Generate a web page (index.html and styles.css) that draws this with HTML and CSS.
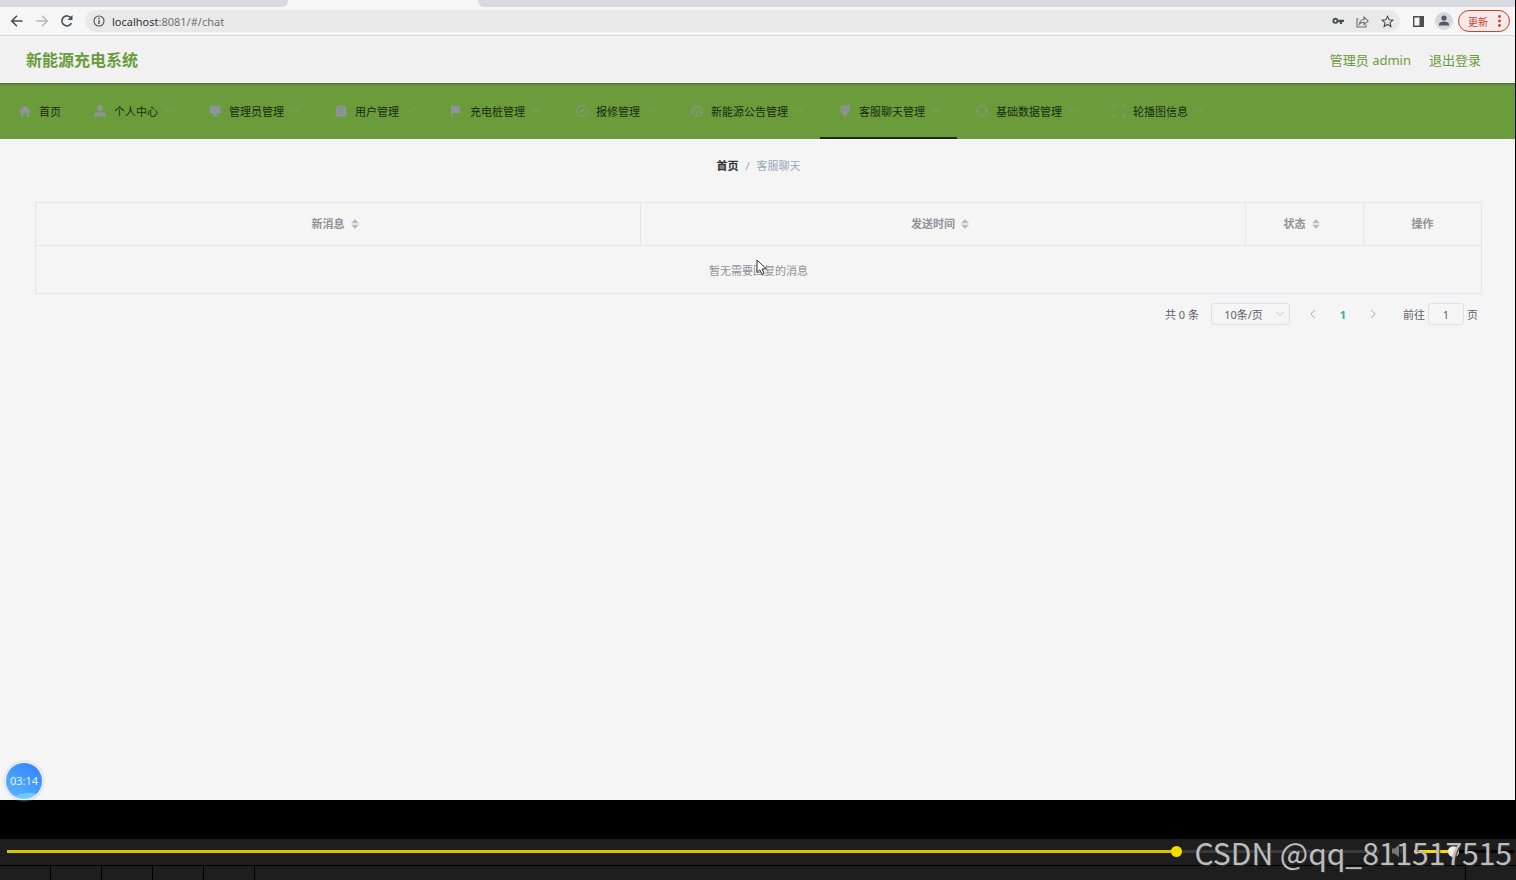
FILE: index.html
```html
<!DOCTYPE html>
<html lang="zh">
<head>
    <meta charset="UTF-8">
    <meta name="viewport" content="width=device-width, initial-scale=1.0">
    <title>新能源充电系统</title>
    <link rel="stylesheet" href="styles.css">
</head>
<body>
    <div class="browser">
        <div class="tab-strip">
            <div class="tab tab-left"></div>
            <div class="tab-current"></div>
            <div class="tab tab-right"></div>
        </div>
        <div class="toolbar">
            <button class="tool" aria-label="后退"><svg width="14" height="14" viewBox="0 0 14 14" fill="none" stroke="#4b4e52" stroke-width="1.6"><path d="M12.5 7H2M7 1.8 1.8 7 7 12.2"/></svg></button>
            <button class="tool" aria-label="前进"><svg width="14" height="14" viewBox="0 0 14 14" fill="none" stroke="#b4b6b8" stroke-width="1.5"><path d="M1.5 7H12M7 1.8 12.2 7 7 12.2"/></svg></button>
            <button class="tool" aria-label="刷新"><svg width="14" height="14" viewBox="0 0 14 14" fill="none" stroke="#4b4e52" stroke-width="1.6"><path d="M11.4 9.2A5 5 0 1 1 11 4"/><path d="M12.5 1v5h-5z" fill="#4b4e52" stroke="none"/></svg></button>
            <div class="address">
                <svg width="12" height="12" viewBox="0 0 12 12" fill="none" stroke="#4b4e52" stroke-width="1.1"><circle cx="6" cy="6" r="5"/><path d="M6 5.2V9M6 2.8v1.4" stroke-width="1.4"/></svg>
                <span class="url">localhost<i>:8081/#/chat</i></span>
                <button class="tool" aria-label="密码"><svg width="12" height="12" viewBox="0 0 12 12"><path d="M3.4 2.8a3 3 0 1 0 2.8 4.1h1.6v2h2.2v-2H12V4.7H6.2a3 3 0 0 0-2.8-1.9zm0 2a1.1 1.1 0 1 1 0 2.2 1.1 1.1 0 0 1 0-2.2z" fill="#4b4e52"/></svg></button>
                <button class="tool" aria-label="分享"><svg width="13" height="13" viewBox="0 0 13 13" fill="none" stroke="#6b6e72" stroke-width="1.1"><path d="M2.6 4H1v8h9V9.6"/><path d="M3.4 9.2c.3-3 2-4.6 4.6-4.7V2l4.2 3.9L8 9.6V7.2c-2 0-3.5.5-4.6 2z"/></svg></button>
                <button class="tool" aria-label="收藏"><svg width="13" height="13" viewBox="0 0 13 13" fill="none" stroke="#4b4e52" stroke-width="1.1"><path d="m6.5 1.3 1.6 3.5 3.8.4-2.9 2.5.9 3.8-3.4-2-3.4 2 .9-3.8-2.9-2.5 3.8-.4z"/></svg></button>
            </div>
            <button class="tool" aria-label="侧边栏"><svg width="11" height="11" viewBox="0 0 11 11"><path d="M.7.7h9.6v9.6H.7z" fill="none" stroke="#4b4e52" stroke-width="1.4"/><path d="M6.5 0H11v11H6.5z" fill="#4b4e52"/></svg></button>
            <button class="tool" aria-label="用户"><svg width="18" height="18" viewBox="0 0 18 18"><circle cx="9" cy="9" r="9" fill="#d6d8dd"/><circle cx="9" cy="6" r="2.6" fill="#53596b"/><path d="M4 13.500v-1.200c0-1.800 2.400-2.700 5-2.700s5 .9 5 2.700v1.200z" fill="#53596b"/></svg></button>
            <button class="update">更新
                <svg width="3" height="12" viewBox="0 0 3 12" fill="#c5422f"><circle cx="1.5" cy="1.5" r="1.4"/><circle cx="1.5" cy="6" r="1.4"/><circle cx="1.5" cy="10.5" r="1.4"/></svg>
            </button>
        </div>

        <header class="header">
            <h1 class="title">新能源充电系统</h1>
            <div class="user">
                <span>管理员 admin</span>
                <a href="#/login">退出登录</a>
            </div>
        </header>

        <nav class="menu">
            <a class="menu-item home" href="#/">
                <svg class="icon" viewBox="0 0 12 12"><path d="M6 .6.4 5.500l.8 1L1.800 6v5.400h2.800V8h2.800v3.400h2.800V6l.6.5.8-1z"/></svg>
                首页
            </a>
            <a class="menu-item" href="#/center">
                <svg class="icon" viewBox="0 0 12 12"><circle cx="6" cy="3.2" r="2.900"/><path d="M.5 11.500V9.800C.5 8.200 1.800 7.200 3.400 7.200h5.200c1.600 0 2.900 1 2.900 2.600v1.700z"/></svg>
                个人中心
                <svg class="arrow" viewBox="0 0 10 10"><path d="m1.500 3 3.500 3.500L8.500 3"/></svg>
            </a>
            <a class="menu-item" href="#/admins">
                <svg class="icon" viewBox="0 0 12 12"><path d="M.5.8h11v8H.5zM5 8.800h2v1.600h2.200v1H2.800v-1H5z"/></svg>
                管理员管理
                <svg class="arrow" viewBox="0 0 10 10"><path d="m1.500 3 3.500 3.500L8.500 3"/></svg>
            </a>
            <a class="menu-item" href="#/users">
                <svg class="icon" viewBox="0 0 12 12"><path d="M.8 1.500H3V.5h6v1h2.200v10.300H.8z"/><path d="M3 3h6M3 5.800h6M3 8.500h6" stroke="#75985c" stroke-width=".8"/></svg>
                用户管理
                <svg class="arrow" viewBox="0 0 10 10"><path d="m1.500 3 3.500 3.500L8.500 3"/></svg>
            </a>
            <a class="menu-item" href="#/piles">
                <svg class="icon" viewBox="0 0 12 12"><path d="M1 .2h1.200V1h9L9.500 4.500 11.200 8H2.200v4H1z"/></svg>
                充电桩管理
                <svg class="arrow" viewBox="0 0 10 10"><path d="m1.500 3 3.500 3.500L8.500 3"/></svg>
            </a>
            <a class="menu-item" href="#/repairs">
                <svg class="icon line" viewBox="0 0 12 12"><circle cx="6" cy="6" r="5.400"/><path d="M8.500 3.500 5 5 3.700 8.400 7 7z" class="solid"/></svg>
                报修管理
                <svg class="arrow" viewBox="0 0 10 10"><path d="m1.500 3 3.500 3.500L8.500 3"/></svg>
            </a>
            <a class="menu-item" href="#/notices">
                <svg class="icon line" viewBox="0 0 12 12"><circle cx="6" cy="6" r="5.400"/><path d="M2.500 8V6a3.500 3.500 0 0 1 7 0v2M6.800 4.500 5.800 8"/><circle cx="5.800" cy="8.300" r=".8"/></svg>
                新能源公告管理
                <svg class="arrow" viewBox="0 0 10 10"><path d="m1.500 3 3.500 3.500L8.500 3"/></svg>
            </a>
            <a class="menu-item active" href="#/chat">
                <svg class="icon" viewBox="0 0 12 12"><path d="M1.500.5h9v4.200h-9zM1.500 5.300h9v2.500H8.300L7.200 11 6 12 4.800 11 3.700 7.800H1.500z"/></svg>
                客服聊天管理
                <svg class="arrow" viewBox="0 0 10 10"><path d="m1.500 3 3.500 3.500L8.500 3"/></svg>
            </a>
            <a class="menu-item" href="#/dictionary">
                <svg class="icon line" viewBox="0 0 12 12"><circle cx="6" cy="6" r="5.300"/><path d="M6 .7v2.900M6 8.400v2.900M.7 6h2.900M8.400 6h2.900"/></svg>
                基础数据管理
                <svg class="arrow" viewBox="0 0 10 10"><path d="m1.500 3 3.500 3.500L8.500 3"/></svg>
            </a>
            <a class="menu-item" href="#/carousel">
                <svg class="icon line" viewBox="0 0 12 12"><path d="M.6 4V.6H4M8 .6h3.400V4M11.400 8v3.400H8M4 11.400H.6V8"/></svg>
                轮播图信息
                <svg class="arrow" viewBox="0 0 10 10"><path d="m1.500 3 3.500 3.500L8.500 3"/></svg>
            </a>
        </nav>

        <main class="main">
            <div class="breadcrumb">
                <a href="#/">首页</a>
                <span>/</span>
                <span>客服聊天</span>
            </div>

            <div class="table-wrap">
                <table class="table">
                    <thead>
                        <tr>
                            <th>新消息<svg class="sort" viewBox="0 0 8 10"><path d="M0 4.200 4 0l4 4.200zM0 5.800h8L4 10z"/></svg></th>
                            <th>发送时间<svg class="sort" viewBox="0 0 8 10"><path d="M0 4.200 4 0l4 4.200zM0 5.800h8L4 10z"/></svg></th>
                            <th class="narrow">状态<svg class="sort" viewBox="0 0 8 10"><path d="M0 4.200 4 0l4 4.200zM0 5.800h8L4 10z"/></svg></th>
                            <th class="narrow">操作</th>
                        </tr>
                    </thead>
                    <tbody>
                        <tr>
                            <td colspan="4">暂无需要回复的消息</td>
                        </tr>
                    </tbody>
                </table>
                <svg class="cursor" width="12" height="17" viewBox="0 0 12 17"><path d="M1 1v12.500l2.900-2.700 2 4.600 2.200-.9-2-4.600h4.200z" fill="#fff" stroke="#333" stroke-width="1"/></svg>
            </div>

            <div class="pagination">
                <span>共 0 条</span>
                <div class="size">
                    <select aria-label="每页条数">
                        <option>10条/页</option>
                        <option>20条/页</option>
                        <option>50条/页</option>
                    </select>
                    <svg class="size-arrow" viewBox="0 0 10 10"><path d="m1.500 3 3.500 3.500L8.500 3"/></svg>
                </div>
                <button class="page" aria-label="上一页"><svg width="10" height="10" viewBox="0 0 10 10"><path d="M6.800 1 2.800 5l4 4"/></svg></button>
                <button class="page current">1</button>
                <button class="page" aria-label="下一页"><svg width="10" height="10" viewBox="0 0 10 10"><path d="m3.200 1 4 4-4 4"/></svg></button>
                <label class="jump">前往<input type="text" value="1">页</label>
            </div>
        </main>
        <div class="timer">03:14</div>
    </div>

    <footer class="player">
        <div class="controls">
            <input class="range progress" type="range" max="1000" value="855" aria-label="播放进度">
            <svg class="speaker" width="14" height="14" viewBox="0 0 14 14"><path d="M1 4.500h2.500L8 1v12L3.500 9.500H1z" fill="#777"/><path d="M10 4.500v5M12 3.500v7" stroke="#444"/></svg>
            <input class="range volume" type="range" max="100" value="38" aria-label="音量">
        </div>
        <div class="buttons">
            <button aria-label="播放"></button>
            <button aria-label="停止"></button>
            <button aria-label="上一个"></button>
            <button aria-label="下一个"></button>
            <button aria-label="打开"></button>
            <button class="last" aria-label="全屏"></button>
        </div>
        <div class="watermark">CSDN @qq_811517515</div>
    </footer>
</body>
</html>
```
FILE: styles.css
```css
* {
    margin: 0;
    padding: 0;
    box-sizing: border-box;
}

body {
    display: flex;
    flex-direction: column;
    min-height: 100vh;
    background: #000;
    font-family: "Noto Sans", "Noto Sans CJK SC", sans-serif;
    font-size: 11px;
    color: #606266;
}

button,
input,
select {
    font: inherit;
    color: inherit;
    border: none;
    background: none;
}

a {
    color: inherit;
    text-decoration: none;
}

svg {
    display: block;
    flex: none;
}

.browser {
    position: relative;
    flex: 1;
    background: #f5f5f5;
    border-right: 1px solid #000;
}

/* 浏览器 */
.tab-strip {
    display: flex;
    height: 7px;
    background: #f6f6f6;
}

.tab {
    background: #d9dbe1;
}

.tab-left {
    width: 19%;
    border-bottom-right-radius: 6px;
}

.tab-current {
    width: 190px;
}

.tab-right {
    flex: 1;
    border-bottom-left-radius: 6px;
}

.toolbar {
    display: flex;
    align-items: center;
    height: 29px;
    padding: 0 5px 0 10px;
    background: #f6f6f6;
    border-bottom: 1px solid #dcdcdc;
}

.tool {
    display: flex;
    justify-content: center;
    flex: none;
    width: 25px;
}

.toolbar > .tool:nth-child(-n+3) {
    width: 14px;
    margin-right: 11px;
}

.address {
    display: flex;
    align-items: center;
    flex: 1;
    height: 22px;
    margin-right: 6px;
    padding-left: 8px;
    border-radius: 11px;
    background: #e9e9e9;
}

.url {
    flex: 1;
    margin-left: 7px;
    font-size: 11px;
    color: #333;
}

.url i {
    font-style: normal;
    color: #6f7276;
}

.update {
    display: flex;
    align-items: center;
    gap: 10px;
    height: 22px;
    margin-left: 2px;
    padding: 0 8px 0 9px;
    border: 1px solid #c5422f;
    border-radius: 11px;
    background: #f6e9e7;
    color: #c5422f;
    font-size: 10px;
}

/* 顶部 */
.header {
    display: flex;
    align-items: center;
    justify-content: space-between;
    height: 47px;
    padding: 0 34px 1px 26px;
    background: #f1f1f1;
    color: #6a9c3c;
}

.title {
    font-size: 16px;
}

.user {
    display: flex;
    gap: 18px;
    font-size: 13px;
}

.menu {
    display: flex;
    height: 56px;
    background: linear-gradient(#4f6b3a, #6a9c3c 3px);
}

.menu-item {
    display: flex;
    align-items: center;
    padding: 2px 16px 0;
    border-bottom: 2px solid transparent;
    color: #1c2a10;
    white-space: nowrap;
}

.menu-item.home {
    padding-right: 14px;
}

.menu-item.active {
    border-bottom-color: #1d2914;
}

.icon {
    width: 12px;
    height: 12px;
    margin: 0 8px 0 3px;
    fill: #909399;
}

.icon.line {
    fill: none;
    stroke: #8b9885;
}

.icon .solid {
    fill: #8b9885;
    stroke: none;
}

.arrow {
    width: 10px;
    height: 10px;
    margin-left: 6px;
    fill: none;
    stroke: #869f74;
}

/* 内容 */
.main {
    padding: 19px 33px 0 35px;
}

.breadcrumb {
    display: flex;
    justify-content: center;
    gap: 7px;
    margin-bottom: 28px;
    line-height: 16px;
    color: #97a8be;
}

.breadcrumb a {
    font-weight: 700;
    color: #303133;
}

.table-wrap {
    position: relative;
}

.table {
    width: 100%;
    table-layout: fixed;
    border-collapse: collapse;
    text-align: center;
    color: #909399;
}

.table th,
.table td {
    border: 1px solid #e6e6e8;
}

.table th {
    height: 43px;
    padding-bottom: 2px;
    font-weight: 700;
}

.table td {
    height: 48px;
}

.table .narrow {
    width: 118px;
}

.sort {
    display: inline-block;
    width: 8px;
    height: 10px;
    margin: 0 6px;
    vertical-align: -1px;
    fill: #b9bcc3;
}

.cursor {
    position: absolute;
    top: 57px;
    left: 50%;
    margin-left: -3px;
}

.pagination {
    display: flex;
    align-items: center;
    justify-content: flex-end;
    margin-top: 9px;
    padding-right: 4px;
}

.size {
    position: relative;
    margin: 0 8px 0 12px;
}

.size select {
    display: block;
    width: 79px;
    height: 22px;
    padding: 0 22px 0 8px;
    border: 1px solid #dcdfe6;
    border-radius: 3px;
    appearance: none;
    text-align: center;
    text-align-last: center;
}

.size-arrow {
    position: absolute;
    top: 6px;
    right: 5px;
    width: 10px;
    height: 10px;
    fill: none;
    stroke: #c0c4cc;
    pointer-events: none;
}

.page {
    display: flex;
    align-items: center;
    justify-content: center;
    width: 30px;
    height: 22px;
    fill: none;
    stroke: #a4a7ad;
}

.page.current {
    font-weight: 700;
    color: #2fb09a;
}

.jump {
    display: flex;
    align-items: center;
    gap: 3px;
    margin-left: 15px;
}

.jump input {
    width: 36px;
    height: 22px;
    border: 1px solid #dcdfe6;
    border-radius: 3px;
    text-align: center;
}

.timer {
    position: absolute;
    left: 5px;
    bottom: 0;
    width: 38px;
    height: 38px;
    border: 1px solid #eef4fb;
    border-radius: 50%;
    background: radial-gradient(ellipse 16px 6px at 65% 100%, #6fcbff 96%, transparent), linear-gradient(35deg, #5cb8ff, #2f80ff);
    box-shadow: 0 0 3px #bbb;
    color: #e4f3ff;
    line-height: 36px;
    text-align: center;
}

/* 播放器 */
.player {
    position: relative;
    padding-top: 39px;
}

.controls {
    display: flex;
    align-items: center;
    height: 26px;
    padding: 0 2px 2px 7px;
    background: #1e1e1e;
}

.range {
    appearance: none;
    height: 3px;
}

.range::-webkit-slider-thumb {
    appearance: none;
    width: 11px;
    height: 11px;
    border-radius: 50%;
    background: #f5dc00;
}

.progress {
    flex: 1;
    background: linear-gradient(to right, #d9c200 85%, #393939 85%);
}

.speaker {
    margin: 0 9px 0 12px;
}

.volume {
    width: 100px;
    background: linear-gradient(to right, #f5dc00 38%, #050505 38%);
}

.volume::-webkit-slider-thumb {
    background: #eee;
}

.buttons {
    display: flex;
    height: 15px;
    border-top: 1px solid #000;
    background: #1e1e1e;
}

.buttons button {
    width: 51px;
    border-right: 1px solid #000;
}

.buttons .last {
    margin-left: auto;
    border-right: none;
    border-left: 1px solid #000;
}

.watermark {
    position: absolute;
    right: 4px;
    bottom: 6px;
    font-family: "Noto Sans CJK SC", sans-serif;
    font-size: 30px;
    line-height: 44px;
    color: #bdbdbd;
    text-shadow: 1px 1px 1px #333;
    pointer-events: none;
}
```
